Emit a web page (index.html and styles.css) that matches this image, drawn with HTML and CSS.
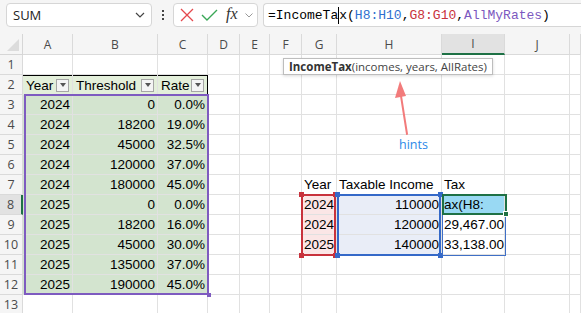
FILE: index.html
```html
<!DOCTYPE html>
<html lang="en">
<head>
  <meta charset="UTF-8" />
  <title>IncomeTax</title>
  <link rel="stylesheet" href="styles.css">
</head>
<body>

  <div class="toolbar">
    <div class="namebox">
      <span>SUM</span>
      <svg width="10" height="6" viewBox="0 0 10 6"><path d="M1 1 L5 5 L9 1" fill="none" stroke="#444" stroke-width="1.2"/></svg>
    </div>
    <div class="dots"><i></i><i></i><i></i></div>
    <div class="fxbox">
      <svg width="14" height="14" viewBox="0 0 14 14"><path d="M1 1 L13 13 M13 1 L1 13" stroke="#e5484d" stroke-width="1.3"/></svg>
      <svg width="17" height="12" viewBox="0 0 17 12"><path d="M1 6 L6 11 L16 1" fill="none" stroke="#3aa757" stroke-width="1.4"/></svg>
      <span class="fx">fx</span>
      <svg width="8" height="5" viewBox="0 0 8 5"><path d="M0.5 0.5 L4 4 L7.5 0.5" fill="none" stroke="#999" stroke-width="1"/></svg>
    </div>
    <div class="formula">=IncomeTa<span class="caret"></span>x(<span class="ref-b">H8:H10</span>,<span class="ref-r">G8:G10</span>,<span class="ref-p">AllMyRates</span>)</div>
  </div>

  <div class="sheet">
    <div class="corner"></div>
    <div class="ch">A</div><div class="ch">B</div><div class="ch">C</div><div class="ch">D</div><div class="ch">E</div><div class="ch">F</div><div class="ch">G</div><div class="ch">H</div><div class="ch active-col">I</div><div class="ch">J</div><div class="ch"></div>

    <div class="rh">1</div>
    <div class="c"></div><div class="c"></div><div class="c"></div><div class="c"></div><div class="c"></div><div class="c"></div><div class="c"></div><div class="c"></div><div class="c"></div><div class="c"></div><div class="c"></div>

    <div class="rh">2</div>
    <div class="c th">Year<span class="flt"></span></div><div class="c th">Threshold<span class="flt"></span></div><div class="c th last">Rate<span class="flt"></span></div>
    <div class="c"></div><div class="c"></div><div class="c"></div><div class="c"></div><div class="c"></div><div class="c"></div><div class="c"></div><div class="c"></div>

    <div class="rh">3</div>
    <div class="c g n">2024</div><div class="c g n">0</div><div class="c g n">0.0%</div>
    <div class="c"></div><div class="c"></div><div class="c"></div><div class="c"></div><div class="c"></div><div class="c"></div><div class="c"></div><div class="c"></div>

    <div class="rh">4</div>
    <div class="c g n">2024</div><div class="c g n">18200</div><div class="c g n">19.0%</div>
    <div class="c"></div><div class="c"></div><div class="c"></div><div class="c"></div><div class="c"></div><div class="c"></div><div class="c"></div><div class="c"></div>

    <div class="rh">5</div>
    <div class="c g n">2024</div><div class="c g n">45000</div><div class="c g n">32.5%</div>
    <div class="c"></div><div class="c"></div><div class="c"></div><div class="c"></div><div class="c"></div><div class="c"></div><div class="c"></div><div class="c"></div>

    <div class="rh">6</div>
    <div class="c g n">2024</div><div class="c g n">120000</div><div class="c g n">37.0%</div>
    <div class="c"></div><div class="c"></div><div class="c"></div><div class="c"></div><div class="c"></div><div class="c"></div><div class="c"></div><div class="c"></div>

    <div class="rh">7</div>
    <div class="c g n">2024</div><div class="c g n">180000</div><div class="c g n">45.0%</div>
    <div class="c"></div><div class="c"></div><div class="c"></div>
    <div class="c">Year</div><div class="c">Taxable Income</div><div class="c">Tax</div>
    <div class="c"></div><div class="c"></div>

    <div class="rh active-row">8</div>
    <div class="c g n">2025</div><div class="c g n">0</div><div class="c g n">0.0%</div>
    <div class="c"></div><div class="c"></div><div class="c"></div>
    <div class="c n red">2024</div><div class="c n blue">110000</div><div class="c editing">ax(H8:</div>
    <div class="c"></div><div class="c"></div>

    <div class="rh">9</div>
    <div class="c g n">2025</div><div class="c g n">18200</div><div class="c g n">16.0%</div>
    <div class="c"></div><div class="c"></div><div class="c"></div>
    <div class="c n red">2024</div><div class="c n blue">120000</div><div class="c n">29,467.00</div>
    <div class="c"></div><div class="c"></div>

    <div class="rh">10</div>
    <div class="c g n">2025</div><div class="c g n">45000</div><div class="c g n">30.0%</div>
    <div class="c"></div><div class="c"></div><div class="c"></div>
    <div class="c n red">2025</div><div class="c n blue">140000</div><div class="c n">33,138.00</div>
    <div class="c"></div><div class="c"></div>

    <div class="rh">11</div>
    <div class="c g n">2025</div><div class="c g n">135000</div><div class="c g n">37.0%</div>
    <div class="c"></div><div class="c"></div><div class="c"></div><div class="c"></div><div class="c"></div><div class="c"></div><div class="c"></div><div class="c"></div>

    <div class="rh">12</div>
    <div class="c g n">2025</div><div class="c g n">190000</div><div class="c g n">45.0%</div>
    <div class="c"></div><div class="c"></div><div class="c"></div><div class="c"></div><div class="c"></div><div class="c"></div><div class="c"></div><div class="c"></div>

    <div class="rh">13</div>
    <div class="c"></div><div class="c"></div><div class="c"></div><div class="c"></div><div class="c"></div><div class="c"></div><div class="c"></div><div class="c"></div><div class="c"></div><div class="c"></div><div class="c"></div>

    <!-- reference highlights drawn over the grid -->
    <div class="range range-rates"><span class="knob br"></span></div>
    <div class="range range-years"><span class="knob tl"></span><span class="knob tr"></span><span class="knob bl"></span><span class="knob br"></span></div>
    <div class="range range-incomes"><span class="knob tl"></span><span class="knob tr"></span><span class="knob bl"></span><span class="knob br"></span></div>
    <div class="range spill"></div>
    <div class="range cursor-cell"><span class="knob br"></span></div>

    <div class="tip"><b>IncomeTax</b>(incomes, years, AllRates)</div>
    <svg class="arrow" width="40" height="70" viewBox="0 0 40 70">
      <path d="M16 22 L22 60" stroke="#f27b7b" stroke-width="2" stroke-linecap="round"/>
      <path d="M15 7 L10 24 L21 22 Z" fill="#f27b7b"/>
    </svg>
    <div class="hints">hints</div>
  </div>

</body>
</html>
```

FILE: styles.css
```css
* { box-sizing: border-box; }

body {
  margin: 0;
  width: 581px;
  height: 313px;
  overflow: hidden;
  background: #fff;
  font-family: "Liberation Sans", Arial, sans-serif;
  color: #000;
}

/* formula bar */
.toolbar {
  height: 34px;
  background: #f5f5f5;
  display: flex;
  align-items: flex-start;
  padding: 3px 0 0 6px;
  font-family: "Open Sans", sans-serif;
}

.namebox,
.fxbox,
.formula {
  height: 24px;
  background: #fff;
  border: 1px solid #d6d6d6;
  border-radius: 4px;
  display: flex;
  align-items: center;
}

.namebox {
  width: 146px;
  justify-content: space-between;
  padding: 0 6px 0 6px;
  font-size: 13px;
  color: #222;
}

.dots {
  width: 21px;
  height: 24px;
  display: flex;
  flex-direction: column;
  align-items: center;
  justify-content: center;
  gap: 2px;
}

.dots i {
  width: 2px;
  height: 2px;
  background: #444;
}

.fxbox {
  width: 85px;
  padding: 0 4px 0 6px;
  justify-content: space-between;
}

.fx {
  font-family: "Liberation Serif", serif;
  font-style: italic;
  font-size: 16px;
  color: #333;
  margin-top: -2px;
}

.formula {
  flex: 1;
  margin-left: 5px;
  border-right: none;
  border-radius: 4px 0 0 4px;
  padding-left: 4px;
  font-family: "Liberation Mono", monospace;
  font-size: 13px;
  white-space: nowrap;
}

.caret {
  display: inline-block;
  width: 1px;
  height: 17px;
  background: #000;
  vertical-align: middle;
}

.ref-b { color: #2f6fcf; }
.ref-r { color: #c8323c; }
.ref-p { color: #7b58c0; }

/* grid */
.sheet {
  position: relative;
  display: grid;
  grid-template-columns: 23px 50px 85px 50px 32px 30px 32px 35px 105px 63px 65px 1fr;
  grid-template-rows: 21px repeat(13, 20px);
}

.corner {
  background: #f5f5f5;
  border-right: 1px solid #d6d6d6;
  border-bottom: 1px solid #d6d6d6;
  position: relative;
}

.corner::after {
  content: "";
  position: absolute;
  right: 3px;
  bottom: 3px;
  border-left: 12px solid transparent;
  border-bottom: 12px solid #dcdcdc;
}

.ch,
.rh {
  background: #f5f5f5;
  border-right: 1px solid #dadada;
  border-bottom: 1px solid #dadada;
  font-family: "Open Sans", sans-serif;
  font-size: 12px;
  color: #4a4a4a;
  display: flex;
  align-items: center;
  justify-content: center;
}

.rh { font-size: 12.5px; }

.active-col {
  background: #e2e2e2;
  border-bottom: 2px solid #1e7145;
}

.active-row {
  background: #e2e2e2;
  border-right: 2px solid #1e7145;
}

.c {
  border-right: 1px solid #e1e1e1;
  border-bottom: 1px solid #e1e1e1;
  font-size: 13.5px;
  line-height: 19px;
  padding: 0 2px;
  white-space: nowrap;
  overflow: hidden;
}

.n { text-align: right; }

.g { background: #d3e4cf; }

.th {
  background: #e3efda;
  box-shadow: inset 0 1px 0 #000;
  display: flex;
  align-items: center;
  justify-content: space-between;
  padding: 1px 3px 0 3px;
}

.th.last { border-right-color: #000; }

.flt {
  width: 13px;
  height: 13px;
  border: 1px solid #a6a6a6;
  background: #f4f4f4;
  display: flex;
  align-items: center;
  justify-content: center;
}

.flt::after {
  content: "";
  border-left: 3.5px solid transparent;
  border-right: 3.5px solid transparent;
  border-top: 4px solid #555;
}

.red { background: #fbe6e6; }
.blue { background: #e9edf7; }
.editing { background: #99d9f3; }

/* highlighted ranges */
.range {
  position: absolute;
  pointer-events: none;
}

.range-rates {
  left: 24px;
  top: 60px;
  width: 185px;
  height: 201px;
  border: 2px solid #7e5bc0;
}

.range-years {
  left: 301px;
  top: 160px;
  width: 35px;
  height: 62px;
  border: 2px solid #c8323c;
}

.range-incomes {
  left: 337px;
  top: 160px;
  width: 104px;
  height: 62px;
  border: 2px solid #3569c8;
}

.spill {
  left: 442px;
  top: 160px;
  width: 64px;
  height: 62px;
  border: 1px solid #3f6fc6;
}

.cursor-cell {
  left: 442px;
  top: 160px;
  width: 65px;
  height: 21px;
  border: 2px solid #1e7145;
}

.knob {
  position: absolute;
  width: 5px;
  height: 5px;
  background: inherit;
}

.range-years .knob { background: #c8323c; }
.range-incomes .knob { background: #3569c8; }
.range-rates .knob { background: #7e5bc0; width: 4px; height: 4px; }
.cursor-cell .knob { background: #1e7145; border: 1px solid #fff; width: 6px; height: 6px; }

.knob.tl { left: -4px; top: -4px; }
.knob.tr { right: -4px; top: -4px; }
.knob.bl { left: -4px; bottom: -4px; }
.knob.br { right: -4px; bottom: -4px; }

/* hint tooltip */
.tip {
  position: absolute;
  left: 283px;
  top: 24px;
  height: 17px;
  padding: 0 5px;
  background: #fff;
  border: 1px solid #bdbdbd;
  box-shadow: 0 1px 3px rgba(0,0,0,0.15);
  font-family: "Open Sans", sans-serif;
  font-size: 11.5px;
  line-height: 15px;
  color: #444;
  white-space: nowrap;
}

.tip b { color: #333; }

.arrow {
  position: absolute;
  left: 385px;
  top: 40px;
}

.hints {
  position: absolute;
  left: 399px;
  top: 102px;
  font-family: "Open Sans", sans-serif;
  font-size: 12.5px;
  color: #2b88e8;
}
```
